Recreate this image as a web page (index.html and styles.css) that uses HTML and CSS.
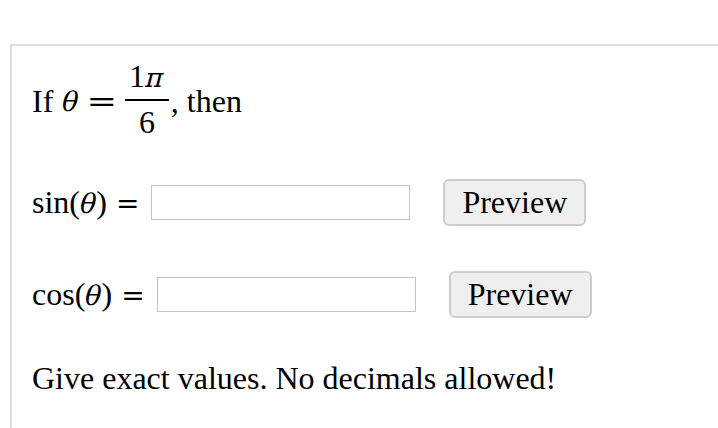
FILE: index.html
```html
<!DOCTYPE html>
<html lang="en">
<head>
    <meta charset="UTF-8">
    <title>Exact values</title>
    <link rel="stylesheet" href="styles.css">
</head>
<body>
<div class="problem">
    <p class="intro">If&nbsp;<i class="var">θ</i><span class="eq">=</span><span class="frac"><span class="num">1<i class="var">π</i></span><span class="den">6</span></span>, then</p>

    <div class="row">
        <span class="label">sin(<i class="var">θ</i>)<span class="eq">=</span></span>
        <input type="text" class="answer">
        <button class="preview">Preview</button>
    </div>

    <div class="row">
        <span class="label">cos(<i class="var">θ</i>)<span class="eq">=</span></span>
        <input type="text" class="answer">
        <button class="preview">Preview</button>
    </div>

    <p class="note">Give exact values. No decimals allowed!</p>
</div>
</body>
</html>
```

FILE: styles.css
```css
body {
    margin: 0;
    font-family: "Liberation Serif", "Times New Roman", serif;
    font-size: 32px;
    color: #000;
    background: #fff;
}

.problem {
    box-sizing: border-box;
    margin: 44px 0 0 10px;
    border-top: 2px solid #dcdcef;
    border-left: 2px solid #dcdcef;
    padding: 17px 0 0 20px;
    height: 384px;
}

.intro {
    margin: 0;
    display: flex;
    align-items: center;
}

.var {
    display: inline-block;
    font-family: "DejaVu Serif", serif;
    font-style: normal;
    font-size: 27px;
    transform: skewX(-14deg);
}

.intro .var {
    margin: 0 1px;
}

.eq {
    display: inline-block;
    font-family: "DejaVu Serif", serif;
    font-size: 28px;
    margin: 0 12px 0 9px;
}

.intro .eq {
    margin: 0 12px 0 10px;
    transform: scaleX(1.3);
}

.frac {
    display: inline-flex;
    flex-direction: column;
    align-items: center;
    line-height: 34px;
    margin: -4px 2px 0 0;
}

.num {
    border-bottom: 2px solid #000;
    padding: 0 4px 4px;
}

.den {
    padding-top: 4px;
}

.row {
    display: flex;
    align-items: center;
    margin-top: 39px;
    height: 48px;
}

.row + .row {
    margin-top: 44px;
}

.answer {
    width: 257px;
    height: 33px;
    border: 1px solid #c4c4c4;
    padding: 0;
    margin: 0;
    font-size: 20px;
}

.preview {
    margin-left: 33px;
    height: 47px;
    padding: 0 17px;
    font-family: "Liberation Serif", "Times New Roman", serif;
    font-size: 32px;
    background: #efefef;
    border: 2px solid #cdcdcd;
    border-radius: 6px;
    color: #000;
}

.note {
    margin: 42px 0 0;
}
```
